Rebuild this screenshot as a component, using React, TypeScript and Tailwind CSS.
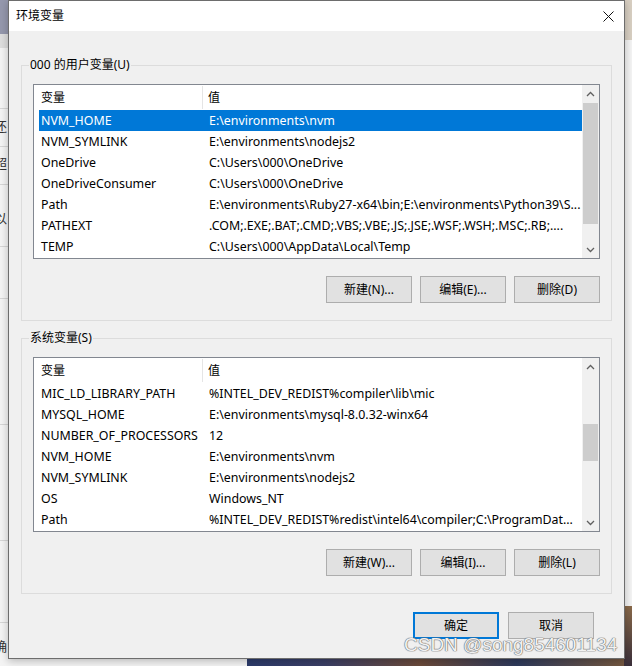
import React from "react";

type Row = [string, string];

const userVars: Row[] = [
  ["NVM_HOME", "E:\\environments\\nvm"],
  ["NVM_SYMLINK", "E:\\environments\\nodejs2"],
  ["OneDrive", "C:\\Users\\000\\OneDrive"],
  ["OneDriveConsumer", "C:\\Users\\000\\OneDrive"],
  ["Path", "E:\\environments\\Ruby27-x64\\bin;E:\\environments\\Python39\\S..."],
  ["PATHEXT", ".COM;.EXE;.BAT;.CMD;.VBS;.VBE;.JS;.JSE;.WSF;.WSH;.MSC;.RB;...."],
  ["TEMP", "C:\\Users\\000\\AppData\\Local\\Temp"],
];

const systemVars: Row[] = [
  ["MIC_LD_LIBRARY_PATH", "%INTEL_DEV_REDIST%compiler\\lib\\mic"],
  ["MYSQL_HOME", "E:\\environments\\mysql-8.0.32-winx64"],
  ["NUMBER_OF_PROCESSORS", "12"],
  ["NVM_HOME", "E:\\environments\\nvm"],
  ["NVM_SYMLINK", "E:\\environments\\nodejs2"],
  ["OS", "Windows_NT"],
  ["Path", "%INTEL_DEV_REDIST%redist\\intel64\\compiler;C:\\ProgramDat..."],
];

function Chevron({ up }: { up?: boolean }) {
  return (
    <svg width="9" height="6" viewBox="0 0 9 6" className="block">
      <polyline
        points={up ? "1,5 4.5,1.5 8,5" : "1,1 4.5,4.5 8,1"}
        fill="none"
        stroke="#606060"
        strokeWidth="1.3"
      />
    </svg>
  );
}

function ScrollBar({ thumbTop, thumbHeight }: { thumbTop: number; thumbHeight: number }) {
  return (
    <div className="relative flex h-full w-[17px] shrink-0 flex-col bg-[#f0f0f0]">
      <div className="flex h-[17px] items-center justify-center">
        <Chevron up />
      </div>
      <div className="flex-1" />
      <div className="flex h-[17px] items-center justify-center">
        <Chevron />
      </div>
      <div
        className="absolute left-[1px] right-[1px] bg-[#cdcdcd]"
        style={{ top: thumbTop, height: thumbHeight }}
      />
    </div>
  );
}

function VarList({
  rows,
  selected,
  thumbTop,
  thumbHeight,
}: {
  rows: Row[];
  selected?: number;
  thumbTop: number;
  thumbHeight: number;
}) {
  return (
    <div className="flex h-[175px] border border-[#828790] bg-white">
      <div className="flex min-w-0 flex-1 flex-col">
        <div className="flex h-[25px] items-center">
          <div className="flex h-[23px] w-[169px] items-center border-r border-[#e5e5e5] pl-[7px]">
            变量
          </div>
          <div className="pl-[5px]">值</div>
        </div>
        {rows.map(([name, value], i) => (
          <div
            key={name + i}
            className={
              i === selected
                ? "ml-[5px] flex h-[21px] items-center bg-[#0078d7] pt-px text-[12.4px] text-white"
                : "ml-[5px] flex h-[21px] items-center pt-px text-[12.4px] text-black"
            }
          >
            <div className="w-[164px] shrink-0 overflow-hidden whitespace-nowrap pl-[2px]">{name}</div>
            <div className="min-w-0 flex-1 overflow-hidden whitespace-nowrap pl-[6px]">{value}</div>
          </div>
        ))}
      </div>
      <ScrollBar thumbTop={thumbTop} thumbHeight={thumbHeight} />
    </div>
  );
}

function Btn({ children, primary }: { children: React.ReactNode; primary?: boolean }) {
  return (
    <div
      className={
        primary
          ? "flex h-[27px] w-[86px] items-center justify-center border-2 border-[#0078d7] bg-[#e1e1e1]"
          : "flex h-[27px] w-[86px] items-center justify-center border border-[#adadad] bg-[#e1e1e1]"
      }
    >
      {children}
    </div>
  );
}

function Group({
  label,
  buttons,
  children,
}: {
  label: string;
  buttons: string[];
  children: React.ReactNode;
}) {
  return (
    <div className="relative border border-[#dcdcdc] px-[11px] pb-[17px] pt-[18px]">
      <span className="absolute left-[7px] top-[-9px] bg-[#f0f0f0] px-[1px] leading-[16px]">{label}</span>
      {children}
      <div className="mt-[17px] flex justify-end gap-[8px]">
        {buttons.map((b) => (
          <Btn key={b}>{b}</Btn>
        ))}
      </div>
    </div>
  );
}

export default function App() {
  return (
    <div className="relative h-[666px] w-[632px] overflow-hidden bg-[#f4f4f4] font-['Noto_Sans','Noto_Sans_CJK_SC',sans-serif] text-[12px] text-black">
      {/* window behind the dialog, left edge */}
      <div className="absolute left-0 top-0 h-[34px] w-[10px] bg-[#9598ad]" />
      <div className="absolute left-0 top-[34px] h-[14px] w-[10px] bg-[#dedede]" />
      <div className="absolute left-0 top-[108px] h-px w-[10px] bg-[#d6d6d6]" />
      <div className="absolute left-0 top-[146px] h-px w-[10px] bg-[#d6d6d6]" />
      <div className="absolute left-0 top-[184px] h-px w-[10px] bg-[#d6d6d6]" />
      <div className="absolute left-0 top-[246px] h-px w-[10px] bg-[#d6d6d6]" />
      <div className="absolute left-0 top-[298px] h-px w-[10px] bg-[#d6d6d6]" />
      <div className="absolute left-0 top-[424px] h-px w-[10px] bg-[#d6d6d6]" />
      <div className="absolute left-0 top-[540px] h-px w-[10px] bg-[#d6d6d6]" />
      <div className="absolute left-0 top-[622px] h-px w-[10px] bg-[#d6d6d6]" />
      <span className="absolute left-[-6px] top-[118px] text-[13px] leading-[16px] text-[#333]">还</span>
      <span className="absolute left-[-6px] top-[155px] text-[13px] leading-[16px] text-[#333]">超</span>
      <span className="absolute left-[-6px] top-[210px] text-[13px] leading-[16px] text-[#333]">以</span>
      <span className="absolute left-[-6px] top-[638px] text-[13px] leading-[16px] text-[#333]">确</span>
      {/* desktop wallpaper peeking out below and to the right */}
      <div className="absolute right-0 top-0 h-[40px] w-[8px] bg-[#d8cfc2]" />
      <div className="absolute bottom-0 left-[247px] right-0 h-[10px] bg-[linear-gradient(90deg,#2c3b6b_0%,#3b3f66_20%,#6b4a3a_45%,#2e3a5c_70%,#7a5a3e_100%)]" />
      <div className="absolute bottom-0 right-0 h-[60px] w-[8px] bg-[linear-gradient(180deg,#8a6a4a,#3a2f3a)]" />

      {/* dialog window */}
      <div className="absolute left-[8px] top-0 flex h-[659px] w-[617px] flex-col border border-[#6d6d6d] bg-[#f0f0f0] shadow-[0_2px_8px_rgba(0,0,0,0.25)]">
        <div className="flex h-[30px] shrink-0 items-center justify-between bg-white pl-[7px] pr-[10px]">
          <span className="text-[12px]">环境变量</span>
          <svg width="11" height="11" viewBox="0 0 11 11" className="block">
            <path d="M0.5 0.5 L10.5 10.5 M10.5 0.5 L0.5 10.5" stroke="#111" strokeWidth="1" />
          </svg>
        </div>
        <div className="flex flex-1 flex-col px-[12px] pt-[34px]">
          <Group label="000 的用户变量(U)" buttons={["新建(N)...", "编辑(E)...", "删除(D)"]}>
            <VarList rows={userVars} selected={0} thumbTop={18} thumbHeight={121} />
          </Group>
          <div className="h-[17px]" />
          <Group label="系统变量(S)" buttons={["新建(W)...", "编辑(I)...", "删除(L)"]}>
            <VarList rows={systemVars} thumbTop={66} thumbHeight={37} />
          </Group>
          <div className="mt-[18px] flex justify-end gap-[9px] pr-[18px]">
            <Btn primary>确定</Btn>
            <Btn>取消</Btn>
          </div>
        </div>
      </div>

      {/* watermark */}
      <div className="absolute left-[404px] top-[634px] whitespace-nowrap font-['Liberation_Sans',sans-serif] text-[19px] leading-[22px] text-[#f2f2f2] [text-shadow:0_0_1px_#6b6b6b,0_0_1px_#6b6b6b,0_0_1px_#6b6b6b]">
        CSDN @song854601134
      </div>
    </div>
  );
}
